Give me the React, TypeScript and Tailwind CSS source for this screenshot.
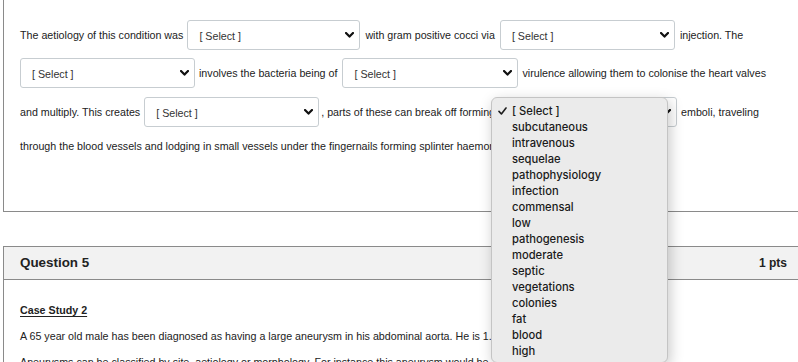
import React from 'react'

const options = [
  'subcutaneous',
  'intravenous',
  'sequelae',
  'pathophysiology',
  'infection',
  'commensal',
  'low',
  'pathogenesis',
  'moderate',
  'septic',
  'vegetations',
  'colonies',
  'fat',
  'blood',
  'high',
]

function Chevron() {
  return (
    <svg width="9" height="6" viewBox="0 0 9 6" className="shrink-0">
      <path d="M1 1 L4.5 4.6 L8 1" fill="none" stroke="#111" strokeWidth="2.2" strokeLinecap="round" strokeLinejoin="round" />
    </svg>
  )
}

function Check() {
  return (
    <svg width="9" height="8" viewBox="0 0 9 8" className="shrink-0">
      <path d="M1 4.4 L3.4 7 L8 1" fill="none" stroke="#1e1e1e" strokeWidth="1.6" strokeLinecap="round" strokeLinejoin="round" />
    </svg>
  )
}

function Select({ className = '' }: { className?: string }) {
  return (
    <div
      className={`flex h-[30px] shrink-0 items-center justify-between rounded-[3px] border border-[#c7cdd1] bg-white pl-[11px] pr-[5px] ${className}`}
    >
      <span className="pt-[2px] text-[10.7px] text-[#333]">[ Select ]</span>
      <Chevron />
    </div>
  )
}

function Line({ children, className = '' }: { children: React.ReactNode; className?: string }) {
  return <div className={`flex items-center whitespace-nowrap ${className}`}>{children}</div>
}

export default function App() {
  return (
    <div
      className="relative h-[362px] w-[798px] overflow-hidden bg-white text-[10.7px] text-[#222]"
      style={{ fontFamily: '"Liberation Sans", Arial, sans-serif' }}
    >
      <div className="ml-[3px] h-[212px] w-[830px] border-x border-b border-[#8a8a8a] pl-[16px] pt-[20px]">
        <Line className="h-[30px]">
          <span>The aetiology of this condition was</span>
          <Select className="ml-[4px] mr-[5px] w-[173px]" />
          <span>with gram positive cocci via</span>
          <Select className="ml-[5px] mr-[5px] w-[175px]" />
          <span>injection. The</span>
        </Line>
        <Line className="mt-[8px] h-[30px]">
          <Select className="mr-[4px] w-[175px]" />
          <span>involves the bacteria being of</span>
          <Select className="ml-[5px] mr-[4px] w-[176px]" />
          <span>virulence allowing them to colonise the heart valves</span>
        </Line>
        <Line className="mt-[9px] h-[30px]">
          <span>and multiply. This creates</span>
          <Select className="ml-[4px] mr-[2px] w-[175px]" />
          <span>, parts of these can break off forming</span>
          <Select className="ml-[6px] mr-[4px] w-[176px]" />
          <span>emboli, traveling</span>
        </Line>
        <Line className="mt-[11px] h-[16px]">
          <span>through the blood vessels and lodging in small vessels under the fingernails forming splinter haemorrhages.</span>
        </Line>
      </div>

      <div className="ml-[3px] mt-[34px] w-[830px] border-x border-t border-[#8a8a8a]">
        <div className="flex h-[33px] items-center justify-between border-b border-[#8a8a8a] bg-[#f2f2f2] pl-[16px] pr-[45px]">
          <span className="text-[13.4px] font-bold text-[#222]">Question 5</span>
          <span className="text-[12px] font-bold text-[#222]">1 pts</span>
        </div>
        <div className="pl-[16px] pt-[22px]">
          <p className="font-bold underline underline-offset-2">Case Study 2</p>
          <p className="mt-[10px] whitespace-nowrap">
            A 65 year old male has been diagnosed as having a large aneurysm in his abdominal aorta. He is 1.
          </p>
          <p className="mt-[10px] whitespace-nowrap">
            Aneurysms can be classified by site, aetiology or morphology. For instance this aneurysm would be
          </p>
        </div>
      </div>

      <div
        className="absolute left-[491px] top-[97px] h-[266px] w-[177px] rounded-[6px] border border-[#c4c4c4] bg-[#ebebeb] pt-[5px] text-[11.2px] font-medium text-[#1a1a1a] shadow-[2px_4px_14px_rgba(0,0,0,0.22)]"
        style={{ fontFamily: 'Inter, "Noto Sans", sans-serif' }}
      >
        <div className="flex h-[16px] items-center">
          <span className="flex w-[20px] justify-start pl-[6px]">
            <Check />
          </span>
          <span>[ Select ]</span>
        </div>
        {options.map(o => (
          <div key={o} className="flex h-[16px] items-center pl-[20px]">
            {o}
          </div>
        ))}
      </div>
    </div>
  )
}
